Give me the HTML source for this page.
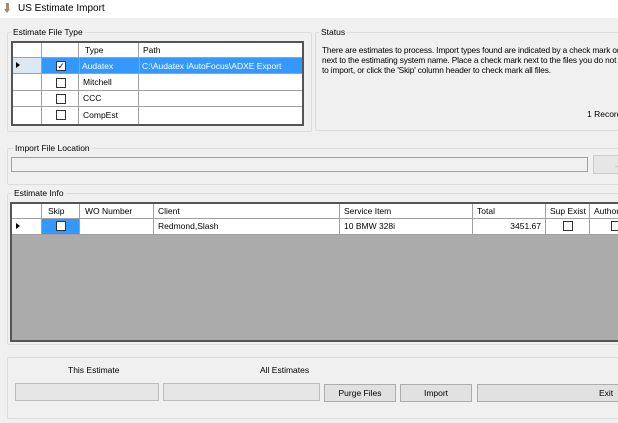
<!DOCTYPE html>
<html><head><style>
*{box-sizing:border-box;margin:0;padding:0}
body{width:618px;height:423px;overflow:hidden;background:#f0f0f0;font-family:"Liberation Sans",sans-serif;font-size:8.5px;color:#000;position:relative}
.a{position:absolute;white-space:nowrap}
.grp{position:absolute;border:1px solid #dcdcdc;border-radius:2px}
.lg{position:absolute;background:#f0f0f0;padding:0 2px;font-size:8.5px;line-height:10px}
.cell{position:absolute;border-right:1px solid #a0a0a0;border-bottom:1px solid #a0a0a0;line-height:15px;padding-left:4px;white-space:nowrap;overflow:hidden}
.cb{position:absolute;width:10px;height:10px;border:1px solid #333;background:#fff}
.btn{position:absolute;border:1px solid #adadad;background:#e1e1e1;text-align:center;line-height:16px;font-size:8.5px}
.pb{position:absolute;border:1px solid #bcbcbc;background:#e6e6e6}
</style></head><body>
<div class="a" style="left:0;top:0;width:618px;height:18px;background:#fff"></div>
<div class="a" style="left:6px;top:3px;width:3px;height:6px;background:#a08a70"></div>
<div class="a" style="left:4px;top:9px;width:0;height:0;border-top:4px solid #a08a70;border-left:3.5px solid transparent;border-right:3.5px solid transparent"></div>
<div class="a" style="left:18px;top:3px;font-size:10px">US Estimate Import</div>

<div class="grp" style="left:7px;top:32px;width:305px;height:100px"></div>
<div class="lg" style="left:11px;top:27px">Estimate File Type</div>
<div class="a" style="left:11px;top:41px;width:293px;height:85px;border:2px solid #555;background:#fff"></div>
<div class="cell" style="left:13px;top:43px;width:29px;height:15px"></div>
<div class="cell" style="left:42px;top:43px;width:37px;height:15px"></div>
<div class="cell" style="left:79px;top:43px;width:60px;height:15px;padding-left:6px">Type</div>
<div class="cell" style="left:139px;top:43px;width:163px;height:15px;border-right:none">Path</div>
<div class="a" style="left:13px;top:58px;width:29px;height:16px;background:#dde8f5;border-right:1px solid #a0a0a0;border-bottom:1px solid #a0a0a0"></div>
<div class="a" style="left:16px;top:62px;width:0;height:0;border-left:4px solid #000;border-top:3.5px solid transparent;border-bottom:3.5px solid transparent"></div>
<div class="a" style="left:42px;top:58px;width:260px;height:16px;background:#3399ff;border-bottom:1px solid #a0a0a0"></div>
<div class="cb" style="left:56px;top:61px;border-color:#333;background:#fff;font-size:9px;line-height:8px;text-align:center">✓</div>
<div class="a" style="left:82px;top:58px;line-height:16px;color:#fff">Audatex</div>
<div class="a" style="left:79px;top:58px;width:1px;height:16px;background:#a0a0a0"></div>
<div class="a" style="left:139px;top:58px;width:1px;height:16px;background:#a0a0a0"></div>
<div class="a" style="left:142px;top:58px;line-height:16px;color:#fff">C:\Audatex iAutoFocus\ADXE Export</div>
<div class="cell" style="left:13px;top:74px;width:29px;height:17px"></div>
<div class="cell" style="left:42px;top:74px;width:37px;height:17px"></div>
<div class="cell" style="left:79px;top:74px;width:60px;height:17px;line-height:16px">Mitchell</div>
<div class="cell" style="left:139px;top:74px;width:163px;height:17px;border-right:none"></div>
<div class="cell" style="left:13px;top:91px;width:29px;height:16px"></div>
<div class="cell" style="left:42px;top:91px;width:37px;height:16px"></div>
<div class="cell" style="left:79px;top:91px;width:60px;height:16px">CCC</div>
<div class="cell" style="left:139px;top:91px;width:163px;height:16px;border-right:none"></div>
<div class="cell" style="left:13px;top:107px;width:29px;height:17px;border-bottom:none"></div>
<div class="cell" style="left:42px;top:107px;width:37px;height:17px;border-bottom:none"></div>
<div class="cell" style="left:79px;top:107px;width:60px;height:17px;border-bottom:none;line-height:16px">CompEst</div>
<div class="cb" style="left:56px;top:78px"></div>
<div class="cb" style="left:56px;top:94px"></div>
<div class="cb" style="left:56px;top:110px"></div>

<div class="grp" style="left:315px;top:32px;width:310px;height:99px"></div>
<div class="lg" style="left:319px;top:27px">Status</div>
<div class="a" style="left:322px;top:45px;line-height:10px;font-size:8.3px;letter-spacing:-0.15px">There are estimates to process. Import types found are indicated by a check mark or<br>next to the estimating system name. Place a check mark next to the files you do not w<br>to import, or click the 'Skip' column header to check mark all files.</div>
<div class="a" style="left:587px;top:109px">1 Record</div>

<div class="grp" style="left:7px;top:148px;width:620px;height:37px"></div>
<div class="lg" style="left:13px;top:143px">Import File Location</div>
<div class="a" style="left:11px;top:157px;width:577px;height:15px;border:1px solid #a0a0a0;background:#f0f0f0"></div>
<div class="btn" style="left:593px;top:155px;width:40px;height:19px;background:#e6e6e6;border-color:#ccc;text-align:left;padding-left:21px;color:#777">...</div>

<div class="grp" style="left:7px;top:193px;width:620px;height:152px"></div>
<div class="lg" style="left:12px;top:188px">Estimate Info</div>
<div class="a" style="left:10px;top:202px;width:620px;height:140px;border:2px solid #555;background:#ababab"></div>
<div class="a" style="left:12px;top:204px;width:610px;height:31px;background:#fff"></div>
<div class="cell" style="left:12px;top:204px;width:30px;height:15px"></div>
<div class="cell" style="left:42px;top:204px;width:38px;height:15px;padding-left:6px">Skip</div>
<div class="cell" style="left:80px;top:204px;width:74px;height:15px;padding-left:5px">WO Number</div>
<div class="cell" style="left:154px;top:204px;width:186px;height:15px">Client</div>
<div class="cell" style="left:340px;top:204px;width:133px;height:15px">Service Item</div>
<div class="cell" style="left:473px;top:204px;width:73px;height:15px">Total</div>
<div class="cell" style="left:546px;top:204px;width:44px;height:15px;padding-left:4px">Sup Exist</div>
<div class="cell" style="left:590px;top:204px;width:40px;height:15px;padding-left:4px">Author</div>
<div class="cell" style="left:12px;top:219px;width:30px;height:16px"></div>
<div class="a" style="left:16px;top:223px;width:0;height:0;border-left:4px solid #000;border-top:3.5px solid transparent;border-bottom:3.5px solid transparent"></div>
<div class="cell" style="left:42px;top:219px;width:38px;height:16px;background:#3399ff"></div>
<div class="cb" style="left:56px;top:221px"></div>
<div class="cell" style="left:80px;top:219px;width:74px;height:16px"></div>
<div class="cell" style="left:154px;top:219px;width:186px;height:16px">Redmond,Slash</div>
<div class="cell" style="left:340px;top:219px;width:133px;height:16px">10 BMW 328i</div>
<div class="cell" style="left:473px;top:219px;width:73px;height:16px;text-align:right;padding-right:4px">3451.67</div>
<div class="cell" style="left:546px;top:219px;width:44px;height:16px"></div>
<div class="cb" style="left:563px;top:221px"></div>
<div class="cell" style="left:590px;top:219px;width:40px;height:16px"></div>
<div class="cb" style="left:611px;top:221px"></div>

<div class="grp" style="left:7px;top:357px;width:620px;height:62px"></div>
<div class="a" style="left:68px;top:365px">This Estimate</div>
<div class="a" style="left:260px;top:365px">All Estimates</div>
<div class="pb" style="left:15px;top:383px;width:144px;height:18px"></div>
<div class="pb" style="left:163px;top:383px;width:157px;height:18px"></div>
<div class="btn" style="left:324px;top:384px;width:72px;height:18px">Purge Files</div>
<div class="btn" style="left:400px;top:384px;width:72px;height:18px">Import</div>
<div class="btn" style="left:477px;top:384px;width:160px;height:18px;text-align:left;padding-left:121px">Exit</div>
</body></html>
